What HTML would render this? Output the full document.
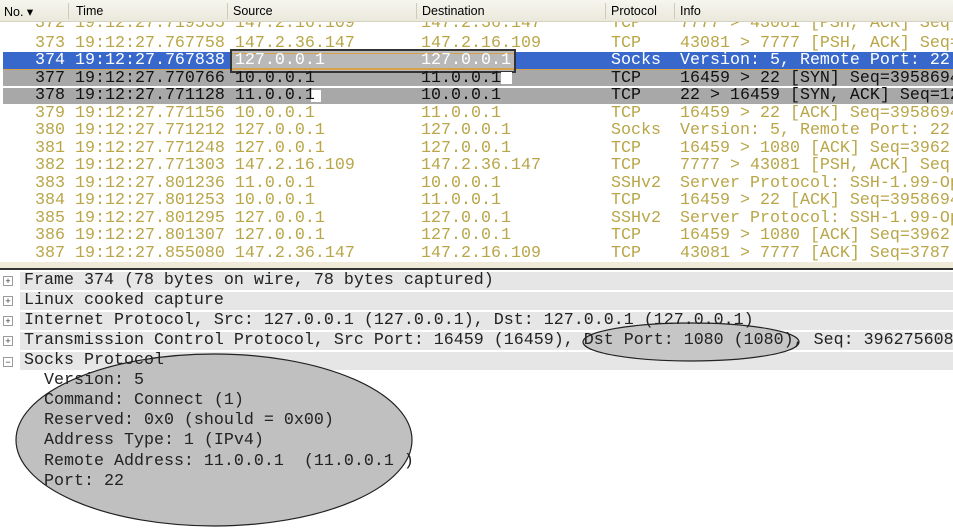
<!DOCTYPE html>
<html><head><meta charset="utf-8"><style>
*{margin:0;padding:0;box-sizing:border-box}
body{width:953px;height:528px;background:#fff;position:relative;overflow:hidden;font-family:"Liberation Mono",monospace;font-size:16.67px}
.hdr{position:absolute;left:0;top:0;width:953px;height:22px;background:linear-gradient(#f6f5ee,#ebe9dc);border-bottom:1px solid #d6d2c2;font-family:"Liberation Sans",sans-serif;font-size:12.5px;color:#000}
.hdr span{position:absolute;top:4px}
.hdr i{position:absolute;top:3px;width:1px;height:16px;background:#cfcbbb}
.r{position:absolute;left:0;width:953px;height:17.45px;line-height:18.5px;color:#b9a648;white-space:pre}
.r span{position:absolute;top:0}
.t{position:absolute;left:0;width:953px;height:18px;line-height:20px;white-space:pre;color:#222}
.g{background:#e6e6e6;left:20px;width:933px}
.pm{position:absolute;left:3px;width:10px;height:10px;border:1px solid #9a9a9a;background:#fff;font-size:9px;line-height:8px;text-align:center;font-family:"Liberation Sans",sans-serif;color:#333}
</style></head><body>
<div class="hdr">
<span style="left:4px">No. ▾</span><i style="left:68px"></i>
<span style="left:76px">Time</span><i style="left:227px"></i>
<span style="left:233px">Source</span><i style="left:416px"></i>
<span style="left:422px">Destination</span><i style="left:605px"></i>
<span style="left:611px">Protocol</span><i style="left:674px"></i>
<span style="left:680px">Info</span>
</div>

<div style="position:absolute;left:3px;top:52px;width:950px;height:17px;background:#3868cc"></div>
<div style="position:absolute;left:3px;top:69px;width:950px;height:2px;background:#d9a04a"></div>
<div style="position:absolute;left:3px;top:70px;width:950px;height:16px;background:#a8a8a8"></div>
<div style="position:absolute;left:3px;top:88px;width:950px;height:16px;background:#a8a8a8"></div>
<div style="position:absolute;left:230px;top:49px;width:286px;height:24px;border:2px solid #333;background:#b9b9b9"></div>
<div style="position:absolute;left:232px;top:53px;width:282px;height:1px;background:#d9a04a"></div>
<div style="position:absolute;left:232px;top:68px;width:282px;height:2px;background:#d9a04a"></div>
<div style="position:absolute;left:311px;top:90px;width:10px;height:12px;background:#fff"></div>
<div style="position:absolute;left:501px;top:72px;width:11px;height:12px;background:#fff"></div>

<div class="r" style="top:15px;clip-path:inset(7px 0 0 0)"><span style="left:35px">372 19:12:27.719535 147.2.16.109</span><span style="left:421px">147.2.36.147</span><span style="left:611px">TCP</span><span style="left:680px">7777 &gt; 43081 [PSH, ACK] Seq</span></div>
<div class="r" style="top:34.5px"><span style="left:35px">373 19:12:27.767758 147.2.36.147</span><span style="left:421px">147.2.16.109</span><span style="left:611px">TCP</span><span style="left:680px">43081 &gt; 7777 [PSH, ACK] Seq=</span></div>
<div class="r" style="top:52px;color:#fff"><span style="left:35px">374 19:12:27.767838 127.0.0.1</span><span style="left:421px">127.0.0.1</span><span style="left:611px">Socks</span><span style="left:680px">Version: 5, Remote Port: 22</span></div>
<div class="r" style="top:69.5px;color:#111"><span style="left:35px">377 19:12:27.770766 10.0.0.1</span><span style="left:421px">11.0.0.1</span><span style="left:611px">TCP</span><span style="left:680px">16459 &gt; 22 [SYN] Seq=3958694</span></div>
<div class="r" style="top:87px;color:#111"><span style="left:35px">378 19:12:27.771128 11.0.0.1</span><span style="left:421px">10.0.0.1</span><span style="left:611px">TCP</span><span style="left:680px">22 &gt; 16459 [SYN, ACK] Seq=12</span></div>
<div class="r" style="top:104.5px"><span style="left:35px">379 19:12:27.771156 10.0.0.1</span><span style="left:421px">11.0.0.1</span><span style="left:611px">TCP</span><span style="left:680px">16459 &gt; 22 [ACK] Seq=3958694</span></div>
<div class="r" style="top:122px"><span style="left:35px">380 19:12:27.771212 127.0.0.1</span><span style="left:421px">127.0.0.1</span><span style="left:611px">Socks</span><span style="left:680px">Version: 5, Remote Port: 22</span></div>
<div class="r" style="top:139.5px"><span style="left:35px">381 19:12:27.771248 127.0.0.1</span><span style="left:421px">127.0.0.1</span><span style="left:611px">TCP</span><span style="left:680px">16459 &gt; 1080 [ACK] Seq=3962</span></div>
<div class="r" style="top:157px"><span style="left:35px">382 19:12:27.771303 147.2.16.109</span><span style="left:421px">147.2.36.147</span><span style="left:611px">TCP</span><span style="left:680px">7777 &gt; 43081 [PSH, ACK] Seq</span></div>
<div class="r" style="top:174.5px"><span style="left:35px">383 19:12:27.801236 11.0.0.1</span><span style="left:421px">10.0.0.1</span><span style="left:611px">SSHv2</span><span style="left:680px">Server Protocol: SSH-1.99-Op</span></div>
<div class="r" style="top:192px"><span style="left:35px">384 19:12:27.801253 10.0.0.1</span><span style="left:421px">11.0.0.1</span><span style="left:611px">TCP</span><span style="left:680px">16459 &gt; 22 [ACK] Seq=3958694</span></div>
<div class="r" style="top:209.5px"><span style="left:35px">385 19:12:27.801295 127.0.0.1</span><span style="left:421px">127.0.0.1</span><span style="left:611px">SSHv2</span><span style="left:680px">Server Protocol: SSH-1.99-Op</span></div>
<div class="r" style="top:227px"><span style="left:35px">386 19:12:27.801307 127.0.0.1</span><span style="left:421px">127.0.0.1</span><span style="left:611px">TCP</span><span style="left:680px">16459 &gt; 1080 [ACK] Seq=3962</span></div>
<div class="r" style="top:244.5px"><span style="left:35px">387 19:12:27.855080 147.2.36.147</span><span style="left:421px">147.2.16.109</span><span style="left:611px">TCP</span><span style="left:680px">43081 &gt; 7777 [ACK] Seq=3787</span></div>
<div style="position:absolute;left:0;top:262px;width:953px;height:6px;background:#efebd8"></div>
<div style="position:absolute;left:0;top:268px;width:953px;height:2px;background:#333"></div>

<div class="t g" style="top:272px"></div><div class="pm" style="top:276px">+</div>
<div class="t" style="top:271px"><span style="position:absolute;left:24px">Frame 374 (78 bytes on wire, 78 bytes captured)</span></div>
<div class="t g" style="top:292px"></div><div class="pm" style="top:296px">+</div>
<div class="t" style="top:291px"><span style="position:absolute;left:24px">Linux cooked capture</span></div>
<div class="t g" style="top:312px"></div><div class="pm" style="top:316px">+</div>
<div class="t g" style="top:332px"></div><div class="pm" style="top:336px">+</div>
<div class="t g" style="top:352px"></div><div class="pm" style="top:357px">−</div>

<svg style="position:absolute;left:0;top:0" width="953" height="528">
<ellipse cx="691" cy="342" rx="108" ry="19" fill="#c6c6c6" stroke="#222" stroke-width="1.2"/>
<ellipse cx="214" cy="440" rx="198" ry="86" fill="#c0c0c0" stroke="#222" stroke-width="1.2"/>
</svg>

<div class="t" style="top:311px"><span style="position:absolute;left:24px">Internet Protocol, Src: 127.0.0.1 (127.0.0.1), Dst: 127.0.0.1 (127.0.0.1)</span></div>
<div class="t" style="top:331px"><span style="position:absolute;left:24px">Transmission Control Protocol, Src Port: 16459 (16459), Dst Port: 1080 (1080), Seq: 396275608</span></div>
<div class="t" style="top:351px"><span style="position:absolute;left:24px">Socks Protocol</span></div>
<div class="t" style="top:371px"><span style="position:absolute;left:44px">Version: 5</span></div>
<div class="t" style="top:391px"><span style="position:absolute;left:44px">Command: Connect (1)</span></div>
<div class="t" style="top:411px"><span style="position:absolute;left:44px">Reserved: 0x0 (should = 0x00)</span></div>
<div class="t" style="top:431px"><span style="position:absolute;left:44px">Address Type: 1 (IPv4)</span></div>
<div class="t" style="top:452px"><span style="position:absolute;left:44px">Remote Address: 11.0.0.1  (11.0.0.1 )</span></div>
<div class="t" style="top:472px"><span style="position:absolute;left:44px">Port: 22</span></div>
</body></html>
